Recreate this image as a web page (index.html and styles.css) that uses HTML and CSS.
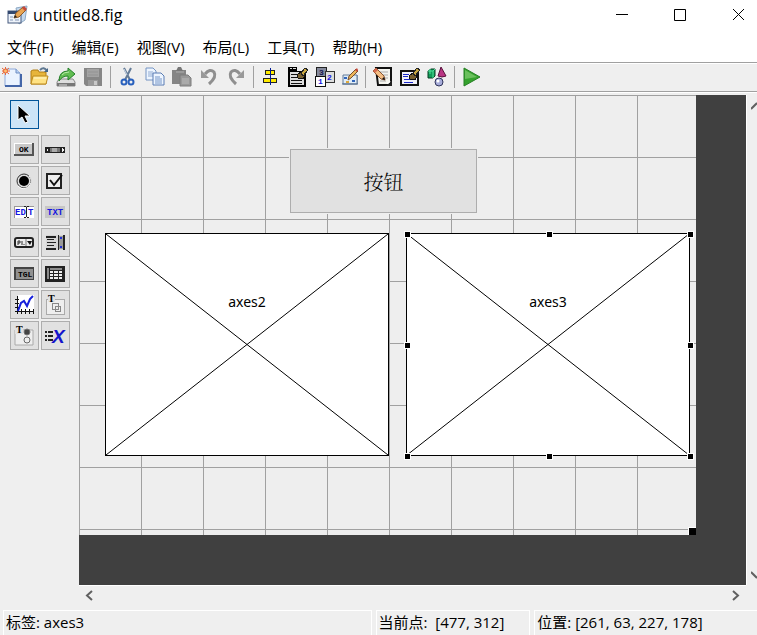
FILE: index.html
```html
<!DOCTYPE html>
<html lang="zh-CN">
<head>
    <meta charset="UTF-8">
    <meta name="viewport" content="width=device-width, initial-scale=1.0">
    <title>untitled8.fig</title>
    <link rel="stylesheet" href="styles.css">
</head>
<body>
    <header class="titlebar">
        <svg class="app-icon" width="21" height="20" viewBox="0 0 21 20">
            <path d="M9 3l11-2-2 14-6 4z" fill="#c4d9ee" stroke="#8fa9c4"/>
            <rect x="1" y="6" width="13" height="12" fill="#eef3fa" stroke="#44597d"/>
            <path d="M1 6h13v3H1z" fill="#34496f"/>
            <path d="M3 12h3M3 15h3M8 15h4" stroke="#8295b5"/>
            <path d="M7 13l2-5 7-6 3 3-7 7z" fill="#e9a552" stroke="#8a5a2c"/>
            <path d="M15 3l2-2 3 3-2 2z" fill="#c5483a"/>
            <path d="M7 13l1-3 2 2z" fill="#222"/>
        </svg>
        <span class="title">untitled8.fig</span>
        <div class="window-buttons">
            <button type="button" aria-label="最小化"><svg width="13" height="13"><path d="M0 6.500h12" stroke="#000"/></svg></button>
            <button type="button" aria-label="最大化"><svg width="13" height="13"><path d="M.5 1.500h11v11h-11z" fill="none" stroke="#000"/></svg></button>
            <button type="button" aria-label="关闭"><svg width="13" height="13"><path d="M1 1l11 11M12 1L1 12" stroke="#000"/></svg></button>
        </div>
    </header>

    <nav class="menubar">
        <a href="#">文件(F)</a>
        <a href="#">编辑(E)</a>
        <a href="#">视图(V)</a>
        <a href="#">布局(L)</a>
        <a href="#">工具(T)</a>
        <a href="#">帮助(H)</a>
    </nav>

    <div class="toolbar">
        <button type="button" aria-label="新建">
            <svg viewBox="0 0 20 20">
                <path d="M3 2h11l4 4v13H3z" fill="#eaf3ff" stroke="#8fa9d8"/>
                <path d="M14 2v4h4" fill="#b8d0f2" stroke="#6f8fc4"/>
                <path d="M3 19h16V7" fill="none" stroke="#4466a8" stroke-width="2"/>
                <path d="M0 1l7 6M7 1L0 7M3.500 0v8M0 4h8" stroke="#e8683c"/>
                <circle cx="3.500" cy="4" r="2" fill="#ffc070" stroke="#e8683c"/>
            </svg>
        </button>
        <button type="button" aria-label="打开">
            <svg viewBox="0 0 20 20">
                <path d="M2 17V4l2-1h5l1 2h7v12z" fill="#e7b53b" stroke="#b17f16"/>
                <path d="M2 17l2-8h15l-2 8z" fill="#ffe283" stroke="#bd8b1f"/>
                <path d="M5 11h12" stroke="#fff6cc"/>
                <path d="M11 3q4-4 7 1" fill="none" stroke="#5f7891" stroke-width="2"/>
                <path d="M15 5h4V1z" fill="#456789"/>
            </svg>
        </button>
        <button type="button" aria-label="导出">
            <svg viewBox="0 0 20 20">
                <path d="M3 12h14l2 3v4H1v-4z" fill="#dedede" stroke="#8a8a8a"/>
                <path d="M1 16h18v3H1z" fill="#777"/>
                <path d="M3 18h8" stroke="#d5d5d5"/>
                <path d="M3 14Q3 4 12 4V1l7 6-7 6V9Q6 9 3 14z" fill="#62bd52" stroke="#25802a"/>
                <path d="M6 8q2-3 7-3" fill="none" stroke="#b9eba9"/>
            </svg>
        </button>
        <button type="button" aria-label="保存">
            <svg viewBox="0 0 20 20">
                <path d="M1 1h18v18H3l-2-2z" fill="#868686"/>
                <path d="M4 2h12v8H4z" fill="#a3a3a3"/>
                <path d="M5 13h10v6H5z" fill="#999"/>
                <path d="M11 14h3v4h-3z" fill="#c8c8c8"/>
                <path d="M5 5h10M5 8h10" stroke="#939393"/>
            </svg>
        </button>
        <span class="separator"></span>
        <button type="button" aria-label="剪切">
            <svg viewBox="0 0 20 20">
                <path d="M6 1l6 12M13 1L7 13" stroke="#647b96" stroke-width="2"/>
                <path d="M6 2l3 6" stroke="#d3deeb"/>
                <circle cx="6" cy="15" r="2.500" fill="none" stroke="#2860bd" stroke-width="2"/>
                <circle cx="13" cy="15" r="2.500" fill="none" stroke="#2860bd" stroke-width="2"/>
            </svg>
        </button>
        <button type="button" aria-label="复制">
            <svg viewBox="0 0 20 20">
                <path d="M1 1h7l3 3v9H1z" fill="#edf5ff" stroke="#7594c3"/>
                <path d="M3 5h5M3 7h6M3 9h6" stroke="#91abd2"/>
                <path d="M8 6h8l3 3v9H8z" fill="#edf5ff" stroke="#5b7db4"/>
                <path d="M10 10h5M10 12h7M10 14h7M10 16h7" stroke="#7595c7"/>
            </svg>
        </button>
        <button type="button" aria-label="粘贴">
            <svg viewBox="0 0 20 20">
                <path d="M0 3h14v14H0z" fill="#858585"/>
                <path d="M4 4l2-4h3l2 4z" fill="#777"/>
                <path d="M4 5h8" stroke="#b0b0b0"/>
                <path d="M8 8h8l3 3v8H8z" fill="#999" stroke="#7c7c7c"/>
                <path d="M10 12h7M10 14h7M10 16h7" stroke="#bbb"/>
            </svg>
        </button>
        <button type="button" aria-label="撤消">
            <svg viewBox="0 0 20 20">
                <path d="M6 7Q11 1 15 5Q18 10 10 17" fill="none" stroke="#8f8f8f" stroke-width="3"/>
                <path d="M2 3v8h8z" fill="#999"/>
            </svg>
        </button>
        <button type="button" aria-label="重做">
            <svg viewBox="0 0 20 20">
                <path d="M14 7Q9 1 5 5Q2 10 10 17" fill="none" stroke="#8f8f8f" stroke-width="3"/>
                <path d="M18 3v8h-8z" fill="#999"/>
            </svg>
        </button>
        <span class="separator"></span>
        <button type="button" aria-label="对齐对象">
            <svg class="crisp" viewBox="0 0 20 20">
                <path d="M4 3h10v5H4zM2 11h14v5H2z" fill="#222"/>
                <path d="M5 4h8v3H5zM3 12h12v3H3z" fill="#ffeb00"/>
                <path d="M9 1h1v17H9z" fill="#001b99"/>
            </svg>
        </button>
        <button type="button" aria-label="菜单编辑器">
            <svg class="crisp" viewBox="0 0 20 20">
                <path d="M0 0h9v4h9v16H0z" fill="#000"/>
                <path d="M2 5h14v13H2z" fill="#ddd"/>
                <path d="M2 1h2v1H2zM5 1h3v1H5z" fill="#ddd"/>
                <path d="M3 7h6v1H3zM3 10h6v1H3zM3 13h11v1H3zM3 16h11v1H3z" fill="#111"/>
                <path d="M9 8l5-4 3 4-2 4-5-1z" fill="#786030" stroke="#111"/>
                <path d="M13 6l4-5 3 2-5 6z" fill="#c7a641" stroke="#222"/>
            </svg>
        </button>
        <button type="button" aria-label="Tab 键顺序编辑器">
            <svg class="crisp" viewBox="0 0 20 20">
                <path d="M1 0h11v10H1z" fill="#222"/>
                <path d="M2 1h9v8H2z" fill="#858a9c"/>
                <path d="M10 4h10v12H10z" fill="#333"/>
                <path d="M11 5h8v10h-8z" fill="#ddd"/>
                <path d="M0 9h11v11H0z" fill="#111"/>
                <path d="M1 10h9v9H1z" fill="#fff"/>
                <text x="4" y="8" class="tiny navy">3</text>
                <text x="12" y="13" class="tiny blue">2</text>
                <text x="3" y="17" class="tiny blue">1</text>
            </svg>
        </button>
        <button type="button" class="narrow" aria-label="工具栏编辑器">
            <svg viewBox="0 0 16 20">
                <path d="M1 8h14v9H1z" fill="#e1edf7" stroke="#617b99"/>
                <path d="M0 17h16V8" fill="none" stroke="#506988"/>
                <path d="M2 10h3v2H2zM10 13h3v2h-3z" fill="#3266bb"/>
                <path d="M4 14h3v2H4z" fill="#dfa93a"/>
                <path d="M6 13l1-4 7-7 2 2-7 7z" fill="#edb65b" stroke="#76502f"/>
                <path d="M13 3l2-2 1 2-1 2z" fill="#c74739"/>
            </svg>
        </button>
        <span class="separator"></span>
        <button type="button" aria-label="编辑器">
            <svg viewBox="0 0 20 20">
                <path d="M3 1h15v17H5z" fill="#f4f4ee" stroke="#111" stroke-width="2"/>
                <path d="M7 5h8M9 8h6M8 11h7M7 14h6" stroke="#aaa"/>
                <path d="M12 19l7-5v5z" fill="#222"/>
                <path d="M13 16l5-2-3 3z" fill="#fff"/>
                <path d="M0 4l3-3 8 8 1 4-4-1z" fill="#f3bd83" stroke="#87532f"/>
                <path d="M0 4l3-3 2 2-3 3z" fill="#d66a50"/>
                <path d="M12 13l-3-1 2-2z" fill="#111"/>
            </svg>
        </button>
        <button type="button" aria-label="属性检查器">
            <svg class="crisp" viewBox="0 0 20 20">
                <path d="M0 3h19v16H0z" fill="#111"/>
                <path d="M2 5h15v12H2z" fill="#f1f1fa"/>
                <path d="M3 7h6v1H3zM3 9h5v1H3zM4 12h10v1H4zM4 15h9v1H4z" fill="#1c2acb"/>
                <path d="M9 9l5-4 3 4-2 4-5-1z" fill="#786030" stroke="#111"/>
                <path d="M13 6l4-5 3 2-5 6z" fill="#c7a641" stroke="#222"/>
            </svg>
        </button>
        <button type="button" aria-label="对象浏览器">
            <svg viewBox="0 0 20 20">
                <path d="M1 4l3-2h4v7l-2 2H1z" fill="#119b59" stroke="#063c22"/>
                <path d="M1 4h5v7M6 4l2-2M3 2v5" fill="none" stroke="#51e19a"/>
                <path d="M14 0l5 9q-4 2-8 0z" fill="#b93583" stroke="#57103b"/>
                <circle cx="12" cy="15" r="4" fill="#a7acd9" stroke="#30345b"/>
                <circle cx="11" cy="14" r="1.500" fill="#fff"/>
            </svg>
        </button>
        <span class="separator"></span>
        <button type="button" aria-label="运行">
            <svg viewBox="0 0 20 20">
                <path d="M2 1l16 9-16 9z" fill="#35a22d" stroke="#267f24"/>
                <path d="M3 3l12 7-12 2z" fill="#6bc05d"/>
            </svg>
        </button>
    </div>

    <main class="editor">
        <aside class="palette">
            <button type="button" class="tool selected" aria-label="选择">
                <svg viewBox="0 0 20 20"><path d="M4 0v15l4-3 3 6 3-1-3-6h5z" fill="#000" stroke="#fff"/></svg>
            </button>
            <button type="button" class="tool" aria-label="按钮">
                <svg class="crisp" viewBox="0 0 20 20">
                    <path d="M0 3h20v13H0z" fill="#555"/>
                    <path d="M0 3h18v11H0z" fill="#fff"/>
                    <path d="M1 4h17v10H1z" fill="#c8c8c8"/>
                    <text x="5" y="12" class="tiny">OK</text>
                </svg>
            </button>
            <button type="button" class="tool" aria-label="滑块">
                <svg class="crisp" viewBox="0 0 20 20">
                    <path d="M0 7h20v6H0z" fill="#222"/>
                    <path d="M5 8h10v4H5z" fill="#777"/>
                    <path d="M1 10l2-2v4zM19 10l-2-2v4z" fill="#eee"/>
                    <path d="M7 8h5v4H7z" fill="#aaa"/>
                </svg>
            </button>
            <button type="button" class="tool" aria-label="单选按钮">
                <svg viewBox="0 0 20 20">
                    <circle cx="10" cy="10" r="7" fill="#ddd" stroke="#333"/>
                    <path d="M4 15q6 6 12-1 3-5-1-9" fill="none" stroke="#fff"/>
                    <circle cx="10" cy="10" r="5" fill="#000"/>
                </svg>
            </button>
            <button type="button" class="tool" aria-label="复选框">
                <svg viewBox="0 0 20 20">
                    <path d="M2 3h14v14H2z" fill="#eee" stroke="#222" stroke-width="2"/>
                    <path d="M5 9l4 5 8-10" fill="none" stroke="#111" stroke-width="2"/>
                </svg>
            </button>
            <button type="button" class="tool" aria-label="可编辑文本">
                <svg class="crisp" viewBox="0 0 20 20">
                    <path d="M0 4h20v12H0z" fill="#fff"/>
                    <path d="M0 4h20v1H0zM0 5h1v11H0z" fill="#999"/>
                    <text x="1" y="13" class="tiny wide blue">ED</text>
                    <text x="14" y="13" class="tiny wide blue">T</text>
                    <path d="M10 4h2v1h-2zM13 4h2v1h-2zM12 5h1v10h-1zM10 15h2v1h-2zM13 15h2v1h-2z" fill="#222"/>
                </svg>
            </button>
            <button type="button" class="tool" aria-label="静态文本">
                <svg class="crisp" viewBox="0 0 20 20">
                    <path d="M0 4h20v12H0z" fill="#c6c6c6"/>
                    <text x="2" y="13" class="tiny wide blue">TXT</text>
                </svg>
            </button>
            <button type="button" class="tool" aria-label="弹出式菜单">
                <svg viewBox="0 0 20 20">
                    <rect x="1" y="5" width="18" height="9" rx="2" fill="#eee" stroke="#222" stroke-width="2"/>
                    <path d="M12 6v7" stroke="#777"/>
                    <path d="M4 12V8h2v2H4M8 8v4M10 11v1" fill="none" stroke="#333"/>
                    <path d="M13 8h5l-2 4z" fill="#111"/>
                </svg>
            </button>
            <button type="button" class="tool" aria-label="列表框">
                <svg class="crisp" viewBox="0 0 20 20">
                    <path d="M1 2h18v15H1z" fill="#d5d5d5"/>
                    <path d="M1 3h10v2H1zM2 6h7v1H2zM2 9h9v1H2zM2 12h7v1H2zM1 15h10v2H1zM13 2h1v15h-1zM18 2h2v15h-2z" fill="#222"/>
                    <path d="M14 3h4v13h-4z" fill="#999"/>
                    <path d="M15 4h2v2h-2zM15 13h2v2h-2z" fill="#202ed0"/>
                </svg>
            </button>
            <button type="button" class="tool" aria-label="切换按钮">
                <svg class="crisp" viewBox="0 0 20 20">
                    <path d="M0 3h20v13H0z" fill="#444"/>
                    <path d="M2 5h17v10H2z" fill="#919191"/>
                    <text x="4" y="13" class="tiny">TGL</text>
                </svg>
            </button>
            <button type="button" class="tool" aria-label="表">
                <svg class="crisp" viewBox="0 0 20 20">
                    <path d="M0 2h20v16H0z" fill="#222"/>
                    <path d="M2 4h2v11H2zM5 4h12v2H5z" fill="#8b8b8b"/>
                    <path d="M5 7h3v2H5zM9 7h4v2H9zM14 7h3v2h-3zM5 10h3v2H5zM9 10h4v2H9zM14 10h3v2h-3zM5 13h3v2H5zM9 13h4v2H9zM14 13h3v2h-3z" fill="#eee"/>
                </svg>
            </button>
            <button type="button" class="tool" aria-label="坐标区">
                <svg viewBox="0 0 20 20">
                    <path d="M4 0h16v16H4z" fill="#fff"/>
                    <path d="M3 1v18M1 16h19M1 4h4M1 8h4M1 12h4M7 14v5M11 14v5M15 14v5M19 14v5" class="crisp" fill="none" stroke="#111"/>
                    <path d="M4 16l3-8 3-2 3 5 3-7 3-3" fill="none" stroke="#1620dc" stroke-width="2"/>
                </svg>
            </button>
            <button type="button" class="tool" aria-label="面板">
                <svg class="crisp" viewBox="0 0 20 20">
                    <path d="M1 4h18v15H1z" fill="#eee" stroke="#aaa"/>
                    <path d="M3 0h7v7H3z" fill="#e1e1e1"/>
                    <text x="3" y="7" class="letter">T</text>
                    <path d="M7 8h6v6H7zM10 11h5v5h-5z" fill="none" stroke="#888"/>
                </svg>
            </button>
            <button type="button" class="tool" aria-label="按钮组">
                <svg viewBox="0 0 20 20">
                    <path d="M1 4h18v15H1z" fill="#eee" stroke="#aaa"/>
                    <path d="M1 0h8v8H1z" fill="#e1e1e1"/>
                    <text x="2" y="7" class="letter">T</text>
                    <circle cx="13" cy="6" r="3" fill="#444" stroke="#777"/>
                    <circle cx="13" cy="14" r="3" fill="#eee" stroke="#666"/>
                </svg>
            </button>
            <button type="button" class="tool" aria-label="ActiveX 控件">
                <svg viewBox="0 0 20 20">
                    <path d="M0 5h2v2H0zM3 5h5v2H3zM0 9h2v2H0zM3 9h5v2H3zM0 13h2v2H0zM3 13h5v2H3z" fill="#222"/>
                    <text x="7" y="17" class="activex">X</text>
                </svg>
            </button>
        </aside>

        <section class="workspace">
            <div class="figure">
                <button type="button" class="push-button">按钮</button>
                <div class="axes axes-left">
                    <svg viewBox="0 0 282 221" preserveAspectRatio="none"><path d="M0 0l282 221M282 0L0 221"/></svg>
                    <span>axes2</span>
                </div>
                <div class="axes axes-right">
                    <svg viewBox="0 0 282 221" preserveAspectRatio="none"><path d="M0 0l282 221M282 0L0 221"/></svg>
                    <span>axes3</span>
                    <i class="handle top left"></i>
                    <i class="handle top center"></i>
                    <i class="handle top right"></i>
                    <i class="handle middle left"></i>
                    <i class="handle middle right"></i>
                    <i class="handle bottom left"></i>
                    <i class="handle bottom center"></i>
                    <i class="handle bottom right"></i>
                </div>
                <i class="resize-grip"></i>
            </div>
        </section>

        <div class="scroll-v">
            <svg width="6" height="20"><path d="M0 14l6-6"/></svg>
            <svg width="6" height="20"><path d="M0 7l6 6"/></svg>
        </div>
        <div class="scroll-h">
            <svg width="8" height="11"><path d="M7 1L2 5.500l5 4.500"/></svg>
            <svg width="8" height="11"><path d="M1 1l5 4.500L1 10"/></svg>
        </div>
    </main>

    <footer class="statusbar">
        <div class="status tag">标签: axes3</div>
        <div class="status point">当前点:&nbsp; [477, 312]</div>
        <div class="status position">位置: [261, 63, 227, 178]</div>
    </footer>
</body>
</html>
```
FILE: styles.css
```css
* {
    box-sizing: border-box;
}
body {
    display: flex;
    flex-direction: column;
    height: 100vh;
    margin: 0;
    overflow: hidden;
    background-color: #efefef;
    color: #000;
    font-family: "Open Sans", "Noto Sans CJK SC", sans-serif;
    font-size: 15px;
}
button {
    padding: 0;
    border: none;
    background: none;
    font-family: inherit;
}
svg {
    display: block;
}
.crisp {
    shape-rendering: crispEdges;
}

/* title and menu */
.titlebar {
    display: flex;
    align-items: center;
    height: 29px;
    padding: 0 12px 0 7px;
    background-color: #fff;
}
.title {
    margin-left: 5px;
    font-size: 16px;
    line-height: 26px;
}
.window-buttons {
    display: flex;
    gap: 45px;
    margin-left: auto;
}
.menubar {
    display: flex;
    gap: 18px;
    height: 33px;
    padding: 0 7px;
    background-color: #fff;
    line-height: 36px;
}
.menubar a {
    color: #000;
    text-decoration: none;
    white-space: nowrap;
}

/* toolbar */
.toolbar {
    display: flex;
    align-items: center;
    gap: 7px;
    height: 30px;
    padding-left: 2px;
    border-top: 1px solid #a0a0a0;
    border-bottom: 1px solid #a0a0a0;
    box-shadow: inset 0 1px #fff, 0 1px #fff;
}
.toolbar button {
    width: 20px;
    height: 20px;
}
.toolbar .narrow {
    width: 16px;
}
.separator {
    width: 1px;
    height: 22px;
    background-color: #a0a0a0;
}
.tiny {
    font-family: "Liberation Mono", monospace;
    font-size: 8px;
    font-weight: bold;
}
.wide {
    font-size: 9px;
}
.letter {
    font-family: "Liberation Serif", serif;
    font-size: 10px;
    font-weight: bold;
}
.activex {
    fill: #1515cc;
    font-family: "Liberation Sans", sans-serif;
    font-size: 19px;
    font-style: italic;
    font-weight: bold;
}
.navy {
    fill: #151553;
}
.blue {
    fill: #1515e0;
}

/* editor */
.editor {
    display: grid;
    flex: 1;
    grid-template-columns: 79px 1fr 11px;
    grid-template-rows: 1fr 25px;
    min-height: 0;
    padding-top: 3px;
}
.palette {
    display: grid;
    grid-template-columns: 29px 29px;
    grid-template-rows: 33px;
    grid-auto-rows: 29px;
    gap: 2px;
    align-content: start;
    padding: 5px 10px;
}
.tool {
    display: flex;
    align-items: center;
    padding-left: 3px;
    border: 1px solid #adadad;
    background-color: #e1e1e1;
}
.tool svg {
    width: 20px;
    height: 20px;
    overflow: visible;
}
.tool.selected {
    height: 29px;
    border-color: #005499;
    background-color: #cce4f7;
}
.tool.selected + .tool {
    grid-column: 1;
}
.workspace {
    overflow: hidden;
    background-color: #404040;
}
.figure {
    position: relative;
    width: 617px;
    height: 440px;
    background-color: #eee;
    background-image:
        linear-gradient(to right, #a0a0a0 1px, transparent 1px),
        linear-gradient(to bottom, #a0a0a0 1px, transparent 1px);
    background-size: 62px 62px;
}
.push-button {
    position: absolute;
    left: 211px;
    top: 54px;
    width: 187px;
    height: 64px;
    border: 1px solid #adadad;
    background-color: #e1e1e1;
    box-shadow: 0 0 0 1px #eee;
    font-family: "Noto Serif CJK SC", "Noto Sans CJK SC", serif;
    font-size: 20px;
    font-weight: 300;
}
.axes {
    position: absolute;
    top: 138px;
    width: 284px;
    height: 223px;
    border: 1px solid #000;
    background-color: #fff;
}
.axes-left {
    left: 26px;
}
.axes-right {
    left: 327px;
}
.axes svg {
    width: 100%;
    height: 100%;
}
.axes path {
    stroke: #000;
}
.axes span {
    position: absolute;
    top: 58px;
    left: 0;
    width: 100%;
    font-family: "Noto Sans", sans-serif;
    font-size: 14px;
    line-height: 20px;
    text-align: center;
}
.handle {
    position: absolute;
    width: 7px;
    height: 7px;
    border: 1px solid #fff;
    background-color: #000;
}
.top {
    top: -3px;
}
.middle {
    top: 108px;
}
.bottom {
    bottom: -5px;
}
.left {
    left: -3px;
}
.center {
    left: 139px;
}
.right {
    right: -5px;
}
.resize-grip {
    position: absolute;
    right: 0;
    bottom: 0;
    width: 8px;
    height: 8px;
    border-top: 1px solid #fff;
    border-left: 1px solid #fff;
    background-color: #000;
}
.scroll-v {
    display: flex;
    flex-direction: column;
    justify-content: space-between;
    align-items: flex-end;
    border-left: 1px solid #fff;
}
.scroll-h {
    display: flex;
    grid-column: 2;
    justify-content: space-between;
    padding: 4px 6px;
    border-top: 1px solid #fff;
}
.scroll-v path,
.scroll-h path {
    fill: none;
    stroke: #606060;
    stroke-width: 2;
}

/* status bar */
.statusbar {
    display: flex;
    gap: 4px;
    height: 25px;
    padding-left: 3px;
    line-height: 22px;
    white-space: nowrap;
}
.status {
    padding-left: 2px;
    border: 1px solid #fff;
    border-bottom: none;
}
.tag {
    flex: 370;
}
.point {
    flex: 153;
}
.position {
    flex: 223;
    border-right: none;
}
```
